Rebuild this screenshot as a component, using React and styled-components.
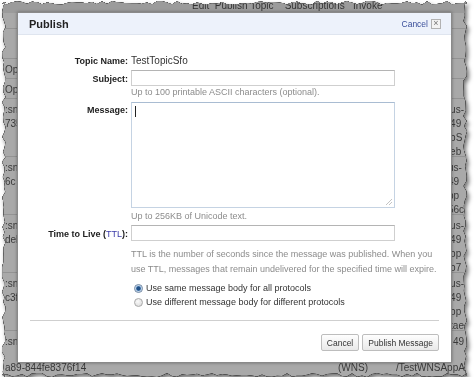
import React from 'react'
import styled, { createGlobalStyle } from 'styled-components'

const W = 465
const H = 376

// jagged "torn paper" outline for the screenshot frame
const tornEdge = (() => {
    let s = 11
    const rnd = () => { s = (s * 9301 + 49297) % 233280; return s / 233280 }
    const pts = []
    for (let x = 0; x <= W; x += 5) pts.push([x, rnd() * 4])
    for (let y = 0; y <= H; y += 5) pts.push([W - rnd() * 4, y])
    for (let x = W; x >= 0; x -= 5) pts.push([x, H - rnd() * 4])
    for (let y = H; y >= 0; y -= 5) pts.push([rnd() * 4, y])
    return `polygon(${pts.map(([x, y]) => `${x.toFixed(1)}px ${y.toFixed(1)}px`).join(',')})`
})()

const GlobalStyle = createGlobalStyle`
    html, body { margin: 0; padding: 0; background: #fff; }
    body { font-family: "Liberation Sans", Arial, sans-serif; }
`

const bgRows = [
    { h: 16, left: [], right: [] },
    { h: 30, left: [], right: [] },
    { h: 20, left: ['Optio'], right: [] },
    { h: 20, left: ['Optio'], right: [] },
    { h: 58, left: [':sn', '735'], right: ['us-', '49', 'pS', 'eb'] },
    { h: 58, left: [':sn', '6c'], right: ['us-', '49', 'pp', '56c'] },
    { h: 58, left: [':sn', 'del'], right: ['us-', '49', 'pp', 'b7'] },
    { h: 58, left: [':sn', 'c3f'], right: ['us-', '49', 'pp', 'tae'] },
]

const App = () => {
    return (
        <>
            <GlobalStyle />
            <Shadow>
                <Frame>
                    <TopStrip>Edit&nbsp;&nbsp;Publish Topic&nbsp;&nbsp;&nbsp;&nbsp;Subscriptions&nbsp;&nbsp;&nbsp;Invoke</TopStrip>
                    {bgRows.map((r, i) => (
                        <BgRow key={i} $h={r.h}>
                            <BgCell>{r.left.map((t, j) => <div key={j}>{t}</div>)}</BgCell>
                            <BgCell>{r.right.map((t, j) => <div key={j}>{t}</div>)}</BgCell>
                        </BgRow>
                    ))}
                    <LastRow>
                        <LastCol>
                            <div>:sn</div>
                            <div>a89-844fe8376f14</div>
                        </LastCol>
                        <div>(WNS)</div>
                        <LastCol>
                            <RightNum>49</RightNum>
                            <div>/TestWNSAppA</div>
                        </LastCol>
                    </LastRow>

                    <Modal>
                        <Header>
                            <Title>Publish</Title>
                            <HeaderActions>
                                <CancelLink href="#">Cancel</CancelLink>
                                <CloseBox>×</CloseBox>
                            </HeaderActions>
                        </Header>
                        <Body>
                            <Form>
                                <Label $pad={0}>Topic Name:</Label>
                                <Value>TestTopicSfo</Value>

                                <Label $pad={2}>Subject:</Label>
                                <Field $gap={4}>
                                    <Input type="text" />
                                    <Hint>Up to 100 printable ASCII characters (optional).</Hint>
                                </Field>

                                <Label $pad={1}>Message:</Label>
                                <Field $gap={3}>
                                    <TextBox>
                                        <Caret />
                                        <Grip viewBox="0 0 8 8">
                                            <path d="M7 1 L1 7 M7 4 L4 7" stroke="#c4c4c4" strokeWidth="1" />
                                        </Grip>
                                    </TextBox>
                                    <Hint $top={2}>Up to 256KB of Unicode text.</Hint>
                                </Field>

                                <Label $pad={2}>Time to Live (<Ttl>TTL</Ttl>):</Label>
                                <Field $gap={0}>
                                    <Input type="text" />
                                    <Desc>
                                        TTL is the number of seconds since the message was published. When you<br />
                                        use TTL, messages that remain undelivered for the specified time will expire.
                                    </Desc>
                                </Field>

                                <span />
                                <Radios>
                                    <RadioRow>
                                        <Radio $checked />
                                        Use same message body for all protocols
                                    </RadioRow>
                                    <RadioRow>
                                        <Radio />
                                        Use different message body for different protocols
                                    </RadioRow>
                                </Radios>
                            </Form>
                            <Divider />
                            <Footer>
                                <Button>Cancel</Button>
                                <Button>Publish Message</Button>
                            </Footer>
                        </Body>
                    </Modal>
                </Frame>
            </Shadow>
        </>
    )
}

const Shadow = styled.div`
    margin: 1px 0 0 2px;
    width: ${W}px;
    height: ${H}px;
    filter: drop-shadow(0 0 0.6px #000) drop-shadow(0 0 0.4px #000) drop-shadow(2px 3px 2px rgba(0, 0, 0, 0.55));
`

const Frame = styled.div`
    position: relative;
    width: 100%;
    height: 100%;
    display: flex;
    flex-direction: column;
    background: #a9a9a9;
    clip-path: ${tornEdge};
    overflow: hidden;
    font-size: 10px;
    color: #3a3a3a;
`

const TopStrip = styled.div`
    height: 12px;
    flex: none;
    line-height: 10px;
    padding-left: 190px;
    background: #9b9b9b;
    color: #333;
    white-space: nowrap;
    overflow: hidden;
`

const BgRow = styled.div`
    height: ${p => p.$h}px;
    flex: none;
    box-sizing: border-box;
    border-bottom: 1px solid #939393;
    display: flex;
    justify-content: space-between;
    padding: 4px 3px 0 3px;
    line-height: 14px;
`

const BgCell = styled.div`
    display: flex;
    flex-direction: column;
`

const LastRow = styled.div`
    flex: 1;
    display: grid;
    grid-template-columns: 1fr 58px 68px;
    padding: 4px 3px 3px 3px;
    line-height: 13px;
    align-items: end;
`

const LastCol = styled.div`
    height: 100%;
    display: flex;
    flex-direction: column;
    justify-content: space-between;
`

const RightNum = styled.div`
    text-align: right;
`

const Modal = styled.div`
    position: absolute;
    left: 15px;
    top: 11px;
    width: 435px;
    height: 351px;
    box-sizing: border-box;
    background: #fff;
    border: 1px solid #8a8a8a;
    box-shadow: 0 0 3px rgba(0, 0, 0, 0.35);
    display: flex;
    flex-direction: column;
    color: #333;
`

const Header = styled.div`
    height: 21px;
    flex: none;
    background: #edf2fb;
    border-bottom: 1px solid #dfe5ef;
    display: flex;
    align-items: center;
    justify-content: space-between;
    padding: 0 10px 0 11px;
`

const Title = styled.div`
    font-weight: bold;
    font-size: 11px;
    color: #222;
`

const HeaderActions = styled.div`
    display: flex;
    align-items: center;
    gap: 3px;
`

const CancelLink = styled.a`
    font-size: 8.5px;
    color: #3a4f9a;
    text-decoration: none;
`

const CloseBox = styled.span`
    width: 8px;
    height: 8px;
    border: 1px solid #b2b2b2;
    background: #f3f3f3;
    font-size: 9px;
    line-height: 7px;
    text-align: center;
    color: #777;
`

const Body = styled.div`
    padding-top: 19px;
    display: flex;
    flex-direction: column;
`

const Form = styled.div`
    display: grid;
    grid-template-columns: 110px 264px;
    column-gap: 3px;
    align-items: start;
`

const Label = styled.div`
    text-align: right;
    font-weight: bold;
    font-size: 9px;
    color: #222;
    line-height: 14px;
    padding-top: ${p => p.$pad}px;
`

const Ttl = styled.span`
    color: #3a3aa8;
    font-weight: normal;
`

const Value = styled.div`
    font-size: 10px;
    line-height: 14px;
    margin-bottom: 2px;
`

const Field = styled.div`
    display: flex;
    flex-direction: column;
    margin-bottom: ${p => p.$gap}px;
`

const Input = styled.input`
    box-sizing: border-box;
    height: 16px;
    width: 264px;
    margin: 0;
    padding: 0 2px;
    border: 1px solid #cfcfcf;
    border-top-color: #b4b4b4;
    background: #fff;
    outline: none;
`

const TextBox = styled.div`
    position: relative;
    box-sizing: border-box;
    height: 106px;
    width: 264px;
    border: 1px solid #c5d3e3;
    border-top-color: #a9bcd2;
    background: #fff;
    padding: 3px 3px;
`

const Caret = styled.span`
    display: block;
    width: 1px;
    height: 11px;
    background: #222;
`

const Grip = styled.svg`
    position: absolute;
    right: 1px;
    bottom: 1px;
    width: 8px;
    height: 8px;
`

const Hint = styled.div`
    font-size: 9px;
    line-height: 12px;
    color: #8c8c8c;
    margin-top: ${p => p.$top || 0}px;
`

const Desc = styled.div`
    font-size: 9px;
    line-height: 15px;
    color: #8c8c8c;
    margin-top: 6px;
    white-space: nowrap;
`

const Radios = styled.div`
    margin-top: 4px;
    display: flex;
    flex-direction: column;
`

const RadioRow = styled.label`
    display: flex;
    align-items: center;
    gap: 3px;
    font-size: 9px;
    line-height: 14px;
    color: #333;
    padding-left: 3px;
`

const Radio = styled.span`
    box-sizing: border-box;
    width: 9px;
    height: 9px;
    border-radius: 50%;
    border: 1px solid ${p => (p.$checked ? '#6f86a3' : '#a9a9a9')};
    background: ${p => (p.$checked
        ? 'radial-gradient(circle, #1f4f86 0 1.8px, #7ea7d2 2.4px, #e8f0f8 3.4px)'
        : 'radial-gradient(circle at 40% 35%, #fafafa, #d6d6d6)')};
`

const Divider = styled.div`
    height: 1px;
    background: #cfcfcf;
    margin: 11px 12px 0 12px;
`

const Footer = styled.div`
    display: flex;
    justify-content: flex-end;
    gap: 3px;
    padding: 13px 12px 0 0;
`

const Button = styled.button`
    height: 17px;
    padding: 0 5px;
    font-family: "Liberation Sans", Arial, sans-serif;
    font-size: 8.5px;
    color: #333;
    border: 1px solid #bdbdbd;
    border-radius: 2px;
    background: linear-gradient(#fefefe, #e9e9e9);
`

export default App
